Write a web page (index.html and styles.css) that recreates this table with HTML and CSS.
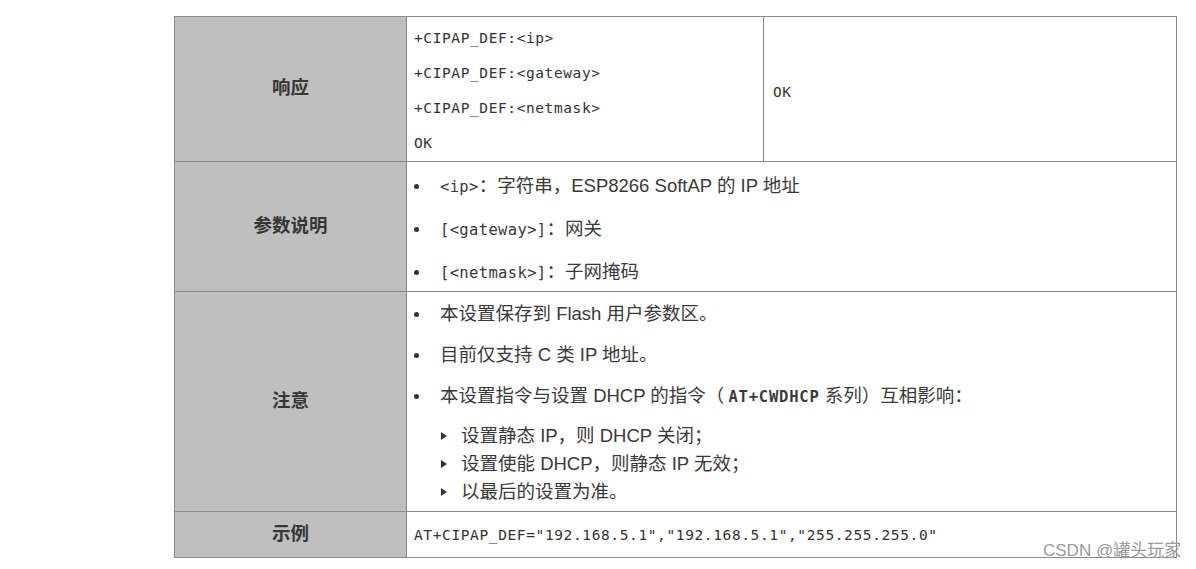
FILE: index.html
```html
<!DOCTYPE html>
<html lang="zh">
<head>
<meta charset="utf-8">
<link rel="stylesheet" href="styles.css">
</head>
<body>
<div class="page">
  <table class="spec">
    <colgroup>
      <col class="c1"><col class="c2"><col class="c3">
    </colgroup>
    <tr class="r1">
      <th>响应</th>
      <td class="code-cell">
        <div class="mline">+CIPAP_DEF:&lt;ip&gt;</div>
        <div class="mline">+CIPAP_DEF:&lt;gateway&gt;</div>
        <div class="mline">+CIPAP_DEF:&lt;netmask&gt;</div>
        <div class="mline">OK</div>
      </td>
      <td class="ok-cell"><span class="okmono">OK</span></td>
    </tr>
    <tr class="r2">
      <th>参数说明</th>
      <td colspan="2" class="list-cell">
        <ul class="blist params">
          <li><span class="mono">&lt;ip&gt;</span>：字符串，ESP8266 SoftAP 的 IP 地址</li>
          <li><span class="mono">[&lt;gateway&gt;]</span>：网关</li>
          <li><span class="mono">[&lt;netmask&gt;]</span>：子网掩码</li>
        </ul>
      </td>
    </tr>
    <tr class="r3">
      <th>注意</th>
      <td colspan="2" class="list-cell">
        <ul class="blist notes">
          <li>本设置保存到 Flash 用户参数区。</li>
          <li>目前仅支持 C 类 IP 地址。</li>
          <li>本设置指令与设置 DHCP 的指令（<span class="mono strong">AT+CWDHCP</span> 系列）互相影响：</li>
        </ul>
        <ul class="tlist">
          <li>设置静态 IP，则 DHCP 关闭；</li>
          <li>设置使能 DHCP，则静态 IP 无效；</li>
          <li>以最后的设置为准。</li>
        </ul>
      </td>
    </tr>
    <tr class="r4">
      <th>示例</th>
      <td colspan="2" class="code-cell example">AT+CIPAP_DEF="192.168.5.1","192.168.5.1","255.255.255.0"</td>
    </tr>
  </table>
  <div class="watermark">CSDN @罐头玩家</div>
</div>
</body>
</html>
```

FILE: styles.css
```css
html, body {
  margin: 0;
  padding: 0;
  background: #ffffff;
}

.page {
  position: relative;
  width: 1196px;
  height: 569px;
  padding: 16px 0 0 174px;
  box-sizing: border-box;
  font-family: "Liberation Sans", "Noto Sans CJK SC", sans-serif;
  color: #3a3a3a;
}

.spec {
  border-collapse: collapse;
  table-layout: fixed;
  width: 1002px;
}

.c1 { width: 232px; }
.c2 { width: 357px; }
.c3 { width: 413px; }

.spec th,
.spec td {
  border: 1px solid #8a8a8a;
  padding: 0;
}

.spec th {
  background: #bfbfbf;
  font-family: "Noto Sans CJK SC", sans-serif;
  font-weight: 600;
  font-size: 18.5px;
  color: #363636;
  text-align: center;
  vertical-align: middle;
  padding-bottom: 6px;
}

.r1 { height: 145px; }
.r2 { height: 130px; }
.r3 { height: 220px; }
.r4 { height: 46px; }

.mono {
  font-family: "DejaVu Sans Mono", "Liberation Mono", monospace;
  font-size: 15.5px;
  letter-spacing: 0.35px;
}

.strong {
  font-weight: bold;
  font-size: 15.5px;
  letter-spacing: 0.8px;
  margin-left: 4px;
}

.spec td.code-cell {
  font-family: "DejaVu Sans Mono", "Liberation Mono", monospace;
  font-size: 14.5px;
  letter-spacing: 0.6px;
  color: #333333;
  vertical-align: top;
  padding-left: 7px;
}

.r1 td.code-cell { padding-top: 4px; }

.mline {
  line-height: 35px;
  height: 35px;
}

.spec td.ok-cell {
  vertical-align: middle;
  padding: 5px 0 0 9px;
  color: #333333;
}

.okmono {
  font-family: "DejaVu Sans Mono", "Liberation Mono", monospace;
  font-size: 14.5px;
  letter-spacing: 0.6px;
}

.spec td.example {
  vertical-align: middle;
  letter-spacing: 0.62px;
}

.spec td.list-cell {
  vertical-align: top;
  padding: 0;
}

.blist, .tlist {
  list-style: none;
  margin: 0;
  padding: 0;
}

.blist li {
  position: relative;
  padding-left: 33px;
  font-size: 18.5px;
  line-height: 26px;
}

.blist li::before {
  content: "";
  position: absolute;
  left: 7px;
  top: 11px;
  width: 5px;
  height: 5px;
  border-radius: 50%;
  background: #333333;
}

.params { padding-top: 11px; }
.params li + li { margin-top: 16px; }

.notes { padding-top: 9px; }
.notes li + li { margin-top: 15px; }

.tlist {
  margin-top: 12px;
  padding-left: 33px;
}

.tlist li {
  position: relative;
  padding-left: 21px;
  font-size: 18.5px;
  line-height: 28px;
}

.tlist li::before {
  content: "";
  position: absolute;
  left: 1px;
  top: 10px;
  width: 0;
  height: 0;
  border-top: 4.5px solid transparent;
  border-bottom: 4.5px solid transparent;
  border-left: 6px solid #333333;
}

.watermark {
  position: absolute;
  left: 1043px;
  top: 541px;
  font-family: "Liberation Sans", "Noto Sans CJK SC", sans-serif;
  font-size: 17px;
  color: #9a9a9a;
  line-height: 20px;
}
```
